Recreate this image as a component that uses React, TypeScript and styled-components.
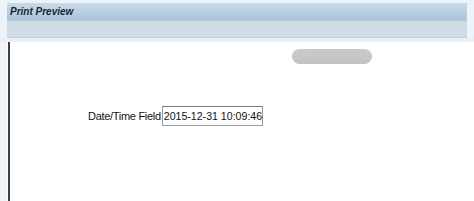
import React from "react";
import styled, { createGlobalStyle } from "styled-components";

const GlobalStyle = createGlobalStyle`
  html, body {
    margin: 0;
    padding: 0;
    background: #ffffff;
    font-family: "Liberation Sans", Arial, sans-serif;
  }
`;

const SPage = styled.div`
  width: 474px;
  height: 201px;
  display: flex;
  flex-direction: column;
  overflow: hidden;
  background: #ffffff;
`;

const SHeader = styled.div`
  display: flex;
  flex-direction: column;
  padding: 3px 7px 0 7px;
  background: #eef3f7;
`;

const STitleBar = styled.div`
  height: 17px;
  display: flex;
  align-items: center;
  padding-left: 3px;
  background: linear-gradient(#c9dae9, #aac5dc);
  border-bottom: 1px solid #b8cbdc;
`;

const STitle = styled.span`
  font-size: 10px;
  font-weight: bold;
  font-style: italic;
  color: #1b2633;
`;

const SToolbar = styled.div`
  height: 16px;
  background: #cfdce6;
  border-bottom: 1px solid #c3d1dd;
`;

const SStrip = styled.div`
  height: 4px;
  margin: 0 -7px;
  background: #e9eff5;
`;

const SBody = styled.div`
  flex: 1;
  display: flex;
`;

const SGutter = styled.div`
  width: 8px;
  background: linear-gradient(to right, #f1f5f8 0 7px, #ffffff 7px);
  border-right: 2px solid #3a3f44;
`;

const SContent = styled.div`
  flex: 1;
  display: flex;
  flex-direction: column;
  padding-top: 7px;
`;

const SButtonRow = styled.div`
  display: flex;
  padding-left: 282px;
`;

const SPill = styled.div`
  width: 80px;
  height: 15px;
  border-radius: 8px;
  background: linear-gradient(#cbcbcb, #c2c2c2);
  display: flex;
  align-items: center;
  padding-left: 10px;
  box-sizing: border-box;
  font-size: 8px;
  color: #d8d8d8;
`;

const SFieldRow = styled.div`
  display: flex;
  align-items: center;
  margin-top: 42px;
  padding-left: 78px;
  white-space: nowrap;
`;

const SLabel = styled.span`
  font-size: 11px;
  letter-spacing: -0.3px;
  color: #111111;
  margin-right: 1px;
`;

const SInput = styled.div`
  width: 98px;
  height: 18px;
  border: 1px solid #9a9a9a;
  border-top-color: #7a7a7a;
  display: flex;
  align-items: center;
  padding-left: 1px;
  font-size: 10.6px;
  color: #111111;
  box-sizing: content-box;
`;

export default function App() {
  return (
    <>
      <GlobalStyle />
      <SPage>
        <SHeader>
          <STitleBar>
            <STitle>Print Preview</STitle>
          </STitleBar>
          <SToolbar />
          <SStrip />
        </SHeader>
        <SBody>
          <SGutter />
          <SContent>
            <SButtonRow>
              <SPill>◦◦</SPill>
            </SButtonRow>
            <SFieldRow>
              <SLabel>Date/Time Field</SLabel>
              <SInput>2015-12-31 10:09:46</SInput>
            </SFieldRow>
          </SContent>
        </SBody>
      </SPage>
    </>
  );
}
